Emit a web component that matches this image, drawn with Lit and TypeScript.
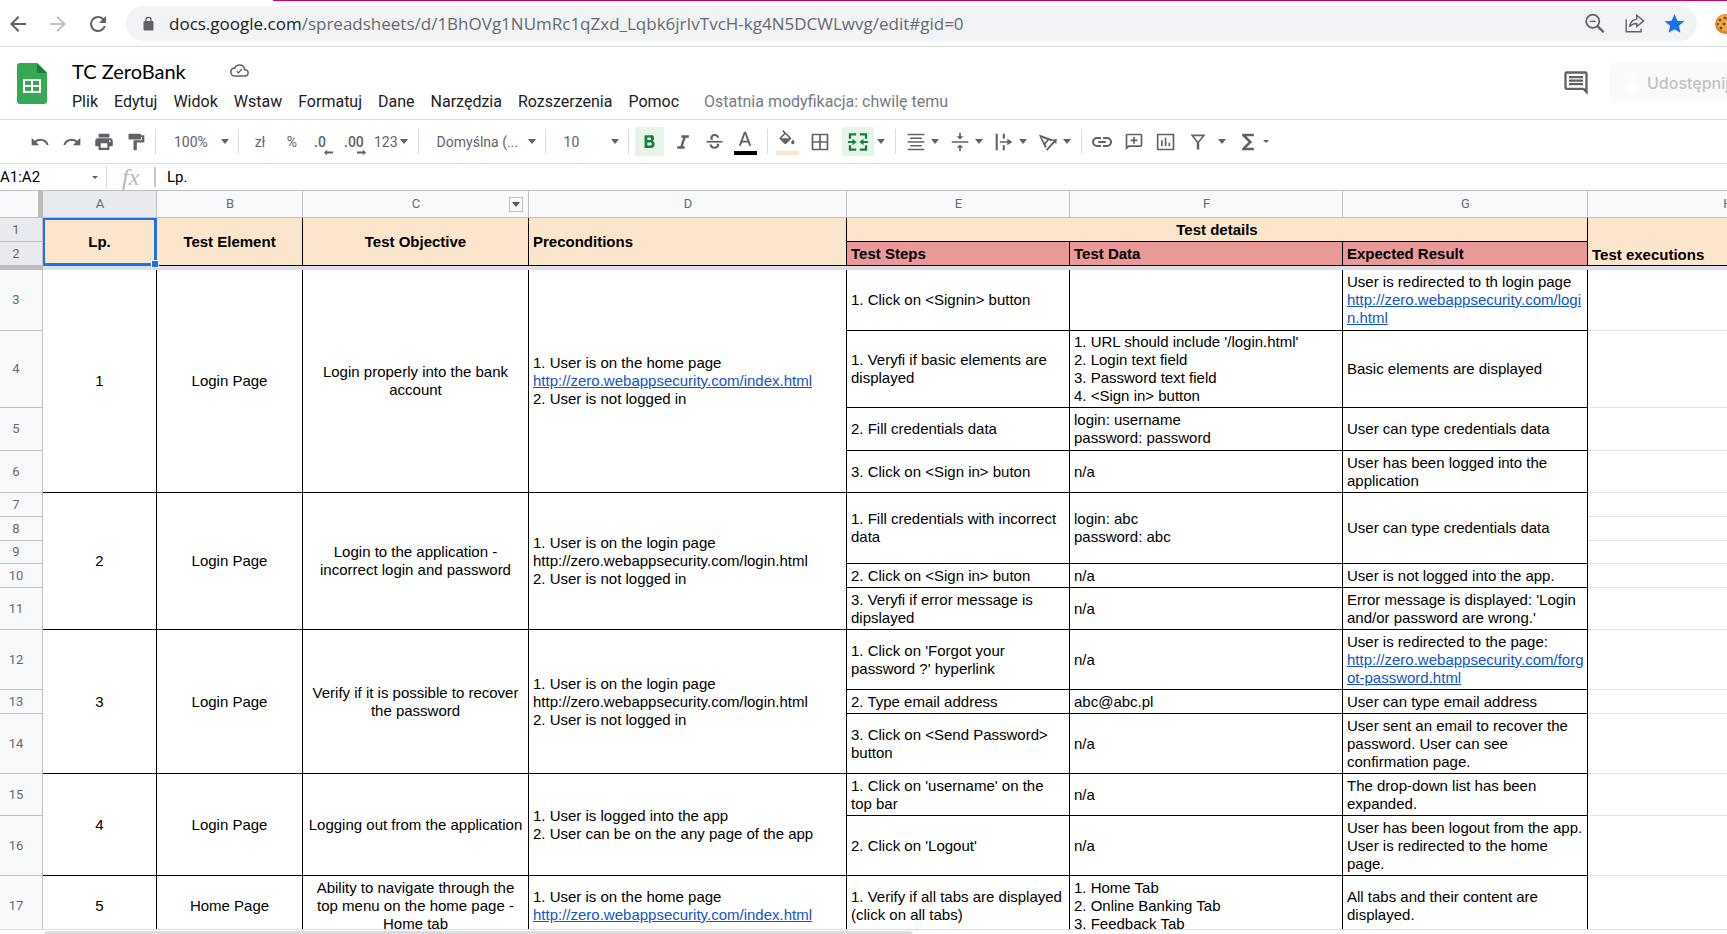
import { LitElement, html, css, svg, nothing } from "lit";
import { customElement } from "lit/decorators.js";

const icon = (body: unknown, size = 20, cls = "") =>
  html`<svg class=${cls} width=${size} height=${size} viewBox="0 0 24 24" fill="currentColor" aria-hidden="true">${body}</svg>`;

const I = {
  back: svg`<path d="M20 11H7.83l5.59-5.59L12 4l-8 8 8 8 1.41-1.41L7.83 13H20v-2z"/>`,
  forward: svg`<path d="M12 4l-1.41 1.41L16.17 11H4v2h12.17l-5.58 5.59L12 20l8-8z"/>`,
  reload: svg`<path d="M17.65 6.35A7.96 7.96 0 0 0 12 4a8 8 0 1 0 7.73 10h-2.08A6 6 0 1 1 12 6c1.66 0 3.14.69 4.22 1.78L13 11h7V4l-2.35 2.35z"/>`,
  lock: svg`<path d="M18 8h-1V6A5 5 0 0 0 7 6v2H6a2 2 0 0 0-2 2v11a2 2 0 0 0 2 2h12a2 2 0 0 0 2-2V10a2 2 0 0 0-2-2zM9 6a3 3 0 0 1 6 0v2H9V6z"/>`,
  zoomOut: svg`<g fill="none" stroke="currentColor" stroke-width="2"><circle cx="10" cy="9.500" r="7.500"/><path d="M15.500 15l7 7" stroke-width="2.800"/><path d="M6.500 9.500h7" stroke-width="1.500"/></g>`,
  share: svg`<g fill="none" stroke="currentColor" stroke-width="1.600"><path d="M2.500 7v14.500h17v-3.500"/><path d="M14.500 2.500l8 6.500-8 6.500v-3.500c-3.500 0-6 .8-8 3.700.6-5 3.500-8 8-8.700z"/></g>`,
  star: svg`<path d="M12 18.600 18.800 22.500l-1.800-7.800L23.500 9.500l-8.200-.7L12 1 8.700 8.800.5 9.500l6.500 5.200-1.800 7.800z"/>`,
  cloud: svg`<path d="M19.350 10.040A7.490 7.490 0 0 0 12 4 7.480 7.480 0 0 0 5.350 8.040 5.990 5.990 0 0 0 0 14a6 6 0 0 0 6 6h13a5 5 0 0 0 .35-9.960zM19 18H6a4 4 0 0 1 0-8h.71A5.500 5.500 0 0 1 17.500 11.500v.5H19a3 3 0 0 1 0 6z"/><path d="M10.500 16.200 7.800 13.500l1.200-1.200 1.500 1.500 4-4 1.200 1.200z"/>`,
  comment: svg`<path d="M22 4a2 2 0 0 0-2-2H4a2 2 0 0 0-2 2v12a2 2 0 0 0 2 2h14l4 4V4zm-2 13.170L18.830 16H4V4h16v13.170zM6 12h12v2H6zm0-3h12v2H6zm0-3h12v2H6z"/>`,
  person: svg`<circle cx="12" cy="5" r="3.500"/><path d="M4 15c0-4 4-5.500 8-5.500s8 1.500 8 5.500z"/><g fill="none" stroke="currentColor" stroke-width="2"><circle cx="8" cy="19" r="3"/><circle cx="16" cy="19" r="3"/></g>`,
  undo: svg`<path d="M12.500 8c-2.650 0-5.050.99-6.900 2.600L2 7v9h9l-3.620-3.620A7.970 7.970 0 0 1 12.500 10.500c3.540 0 6.550 2.310 7.600 5.500l2.370-.78A10.520 10.520 0 0 0 12.500 8z"/>`,
  redo: svg`<path d="M18.400 10.600A10.450 10.450 0 0 0 11.500 8a10.520 10.520 0 0 0-9.970 7.220L3.900 16a8 8 0 0 1 12.720-3.620L13 16h9V7l-3.600 3.600z"/>`,
  print: svg`<path d="M19.500 7.500h-15a3 3 0 0 0-3 3V17h4v4.500h13V17h4v-6.500a3 3 0 0 0-3-3zM16 19H8v-5.500h8V19zm3-7a1.100 1.100 0 1 1 0-2.200 1.100 1.100 0 0 1 0 2.200zM18.500 2h-13v4.500h13V2z"/>`,
  paint: svg`<path d="M18 4V3a1 1 0 0 0-1-1H4a1 1 0 0 0-1 1v5a1 1 0 0 0 1 1h13a1 1 0 0 0 1-1V6h1v4H9v11a1 1 0 0 0 1 1h2a1 1 0 0 0 1-1v-8.500h9V4h-4z"/>`,
  bold: svg`<path fill-rule="evenodd" d="M16.600 11.300A4.300 4.300 0 0 0 18.500 7.500 4.800 4.800 0 0 0 13.500 3H5v18h9a5.200 5.200 0 0 0 2.600-9.700zM9 6.500h3.500a1.700 1.700 0 0 1 0 3.400H9zM9 13.500h4.200a2 2 0 0 1 0 4H9z"/>`,
  italic: svg`<path d="M10 4v3h2.210l-3.420 10H5v3h9v-3h-2.210l3.420-10H19V4z"/>`,
  strike: svg`<path d="M2 11.200h20v2.200H2z"/><path d="M7 9.700C5.800 6 8.500 2.500 12.200 2.500c3.300 0 5.500 2 5.700 4.900h-3c-.2-1.500-1.100-2.300-2.700-2.300-2.400 0-3.400 1.800-2 4.600zM14.800 14.900c.8 2.300-.6 3.800-2.700 3.800s-3.200-1.200-3.300-2.900h-3c.1 3.200 2.500 5.400 6.200 5.400 4 0 6.700-2.600 5.800-6.300z"/>`,
  color: svg`<path d="M10.800 2 4.500 19h2.600l1.400-4h7l1.400 4h2.600L13.200 2h-2.400zM9.300 12.800 12 5l2.700 7.800H9.300z"/>`,
  fill: svg`<path d="M16.560 8.940 7.620 0 6.210 1.410l2.380 2.380-5.150 5.150a1.490 1.490 0 0 0 0 2.120l5.500 5.500a1.500 1.500 0 0 0 2.120 0l5.500-5.500a1.500 1.500 0 0 0 0-2.120zM5.210 10 10 5.210 14.790 10H5.210zM19 11.500s-2 2.170-2 3.500a2 2 0 0 0 4 0c0-1.330-2-3.500-2-3.500z"/>`,
  borders: svg`<path d="M2 2v20h20V2H2zm9 18H4v-7h7v7zm0-9H4V4h7v7zm9 9h-7v-7h7v7zm0-9h-7V4h7v7z"/>`,
  merge: svg`<path d="M2 2.500h8V5H4.500v3.500H2zM14 2.500h8v6h-2.500V5H14zM2 15.500h2.500V19H10v2.500H2zM19.500 15.500H22v6h-8V19h5.500zM1 11h5V8.500l4.500 3.500L6 15.500V13H1zM23 11h-5V8.500L13.500 12l4.500 3.500V13h5z"/>`,
  alignH: svg`<path d="M2 2h20v2H2zM5 6.500h14v2H5zM2 11h20v2H2zM5 15.500h14v2H5zM2 20h20v2H2z"/>`,
  alignV: svg`<path d="M8 19h3v4h2v-4h3l-4-4-4 4zm8-14h-3V1h-2v4H8l4 4 4-4zM2 11v2h20v-2H2z"/>`,
  wrap: svg`<path d="M2 2h2.500v20H2zM10.500 2H13v6h-2.500zM10.500 16H13v6h-2.500zM7 11h9V8l6 4-6 4v-3H7z"/>`,
  rotate: svg`<path d="M1 3 18 9l-2 2-3-1-4 5 1.300 2.800L8.500 19.500zM4.300 6.500 8 13l3-3.800z" fill-rule="evenodd"/><path d="m9.500 21 9-10-2-1.500 6-1.500-.5 6.500-1.900-1.900-9 9.900z"/>`,
  link: svg`<path d="M2.500 12A3.600 3.600 0 0 1 6 8.400h4.800V6H6a6 6 0 0 0 0 12h4.800v-2.400H6A3.600 3.600 0 0 1 2.500 12zM7.500 13.200h9v-2.400h-9zM18 6h-4.800v2.400H18a3.600 3.600 0 0 1 0 7.200h-4.800V18H18a6 6 0 0 0 0-12z"/>`,
  addComment: svg`<path d="M2 22V4a2 2 0 0 1 2-2h16a2 2 0 0 1 2 2v12a2 2 0 0 1-2 2H6zM4 4v13l1.200-1H20V4zm7 2h2v3h3v2h-3v3h-2v-3H8V9h3z" fill-rule="evenodd"/>`,
  chart: svg`<path d="M1 2h21v20H1zM3 4v16h17V4zM6 10h2v7H6zm4.500-3h2v10h-2zm4.500 6h2v4h-2z" fill-rule="evenodd"/>`,
  filter: svg`<path d="M3 3h18l-7.500 9.500V21h-3v-8.500zM7 5.200l5 6.300 5-6.300z" fill-rule="evenodd"/>`,
  sigma: svg`<path d="M19 2H5v2.500L12.500 12 5 19.500V22h14v-3h-9l7-7-7-7h9z"/>`,
  left: svg`<path d="M2 12l7-6v4h13v4H9v4z"/>`,
  right: svg`<path d="M22 12l-7-6v4H2v4h13v4z"/>`,
};

const MENU = ["Plik", "Edytuj", "Widok", "Wstaw", "Formatuj", "Dane", "Narzędzia", "Rozszerzenia", "Pomoc"];
const COLUMNS = [
  { name: "A", width: 114 }, { name: "B", width: 146 }, { name: "C", width: 226 }, { name: "D", width: 318 },
  { name: "E", width: 223 }, { name: "F", width: 273 }, { name: "G", width: 245 }, { name: "H", width: 280 },
];

interface Cell { t: string; rows?: number; cls?: string }
interface Row { n: number; h: number; cells: Cell[] }

const c = (t: string, rows = 1): Cell => ({ t, rows, cls: "mid" });
const l = (t: string, rows = 1): Cell => ({ t, rows });

const ROWS: Row[] = [
  { n: 3, h: 61, cells: [c("1", 4), c("Login Page", 4), c("Login properly into the bank\naccount", 4),
    l("1. User is on the home page\n[http://zero.webappsecurity.com/index.html]\n2. User is not logged in", 4),
    l("1. Click on <Signin> button"), l(""), l("User is redirected to th login page\n[http://zero.webappsecurity.com/logi\nn.html]")] },
  { n: 4, h: 77, cells: [l("1. Veryfi if basic elements are\ndisplayed"),
    l("1. URL should include '/login.html'\n2. Login text field\n3. Password text field\n4. <Sign in> button"), l("Basic elements are displayed")] },
  { n: 5, h: 43, cells: [l("2. Fill credentials data"), l("login: username\npassword: password"), l("User can type credentials data")] },
  { n: 6, h: 42, cells: [l("3. Click on <Sign in> buton"), l("n/a"), l("User has been logged into the\napplication")] },
  { n: 7, h: 24, cells: [c("2", 5), c("Login Page", 5), c("Login to the application -\nincorrect login and password", 5),
    l("1. User is on the login page\nhttp://zero.webappsecurity.com/login.html\n2. User is not logged in", 5),
    l("1. Fill credentials with incorrect\ndata", 3), l("login: abc\npassword: abc", 3), l("User can type credentials data", 3)] },
  { n: 8, h: 24, cells: [] },
  { n: 9, h: 23, cells: [] },
  { n: 10, h: 24, cells: [l("2. Click on <Sign in> buton"), l("n/a"), l("User is not logged into the app.")] },
  { n: 11, h: 42, cells: [l("3. Veryfi if error message is\ndipslayed"), l("n/a"), l("Error message is displayed: 'Login\nand/or password are wrong.'")] },
  { n: 12, h: 60, cells: [c("3", 3), c("Login Page", 3), c("Verify if it is possible to recover\nthe password", 3),
    l("1. User is on the login page\nhttp://zero.webappsecurity.com/login.html\n2. User is not logged in", 3),
    l("1. Click on 'Forgot your\npassword ?' hyperlink"), l("n/a"), l("User is redirected to the page:\n[http://zero.webappsecurity.com/forg\not-password.html]")] },
  { n: 13, h: 24, cells: [l("2. Type email address"), l("abc@abc.pl"), l("User can type email address")] },
  { n: 14, h: 60, cells: [l("3. Click on <Send Password>\nbutton"), l("n/a"), l("User sent an email to recover the\npassword. User can see\nconfirmation page.")] },
  { n: 15, h: 42, cells: [c("4", 2), c("Login Page", 2), c("Logging out from the application", 2),
    l("1. User is logged into the app\n2. User can be on the any page of the app", 2),
    l("1. Click on 'username' on the\ntop bar"), l("n/a"), l("The drop-down list has been\nexpanded.")] },
  { n: 16, h: 60, cells: [l("2. Click on 'Logout'"), l("n/a"), l("User has been logout from the app.\nUser is redirected to the home\npage.")] },
  { n: 17, h: 60, cells: [c("5"), c("Home Page"), c("Ability to navigate through the\ntop menu on the home page -\nHome tab"),
    l("1. User is on the home page\n[http://zero.webappsecurity.com/index.html]"),
    l("1. Verify if all tabs are displayed\n(click on all tabs)"), l("1. Home Tab\n2. Online Banking Tab\n3. Feedback Tab"), l("All tabs and their content are\ndisplayed.")] },
];

/* Text inside square brackets is rendered as a hyperlink. */
const rich = (t: string) =>
  t.split(/[\[\]]/).map((part, i) => i % 2
    ? html`<a href=${part.replace("\n", "")}>${part}</a>`
    : part);

@customElement("sheet-grid")
class SheetGrid extends LitElement {
  static styles = css`
    :host { display: block; flex: 1; min-height: 0; overflow: hidden; background: #fff; }
    table { table-layout: fixed; width: 1868px; border-collapse: separate; border-spacing: 0;
      font: 15px/18px "Liberation Sans", Arial, sans-serif; color: #000; }
    th, td { box-sizing: border-box; padding: 0 3px 0 4px; overflow: hidden; white-space: pre; text-align: left; vertical-align: middle;
      border: 0 solid #000; border-width: 0 1px 1px 0; }
    .col, .num { background: #f8f9fa; color: #666a6f; border-color: #c0c0c0; text-align: center;
      font: 13px/18px Roboto, sans-serif; }
    .col { height: 27px; white-space: normal; }
    .col-in { display: flex; align-items: center; justify-content: center; position: relative; }
    .drop { position: absolute; right: 2px; width: 14px; height: 15px; padding: 0; background: #f8f9fa; border: 1px solid #c0c0c0;
      display: grid; place-items: center; }
    .num { padding: 0 10px 0 0; }
    .on { background: #e8eaed; }
    .corner { border-right: 5px solid #bcbcbc; }
    .mid { text-align: center; padding: 0 3px; }
    .peach { background: #fce5cd; }
    .red { background: #ea9999; }
    .low { vertical-align: bottom; padding-bottom: 1px; }
    .picked { position: relative; overflow: visible; box-shadow: inset 0 0 0 2px #1a73e8; border-color: #1a73e8; }
    .handle { position: absolute; right: -3px; bottom: -3px; width: 6px; height: 6px; background: #1a73e8; border: 1px solid #fff; }
    .freeze td { height: 4px; padding: 0; background: #dadfe8; border: 0; }
    .freeze .knob { background: #bcbcbc; }
    .blank { border-color: #e2e3e3; }
    a { color: #1155cc; text-decoration: underline; }
    .tri { border: 4px solid transparent; border-top: 5px solid #555; border-bottom: 0; }
  `;

  render() {
    return html`<table>
      <colgroup><col style="width:43px">${COLUMNS.map((k) => html`<col style="width:${k.width}px">`)}</colgroup>
      <thead>
        <tr>
          <td class="col corner"></td>
          ${COLUMNS.map((k) => html`<th class="col ${k.name === "A" ? "on" : ""}" scope="col"><div class="col-in">${k.name}
            ${k.name === "C" ? html`<button class="drop" aria-label="Menu kolumny"><span class="tri"></span></button>` : nothing}</div></th>`)}
        </tr>
        <tr style="height:24px">
          <th class="num on" scope="row">1</th>
          <th class="peach mid picked" rowspan="2">Lp.<span class="handle"></span></th>
          <th class="peach mid" rowspan="2">Test Element</th>
          <th class="peach mid" rowspan="2">Test Objective</th>
          <th class="peach" rowspan="2">Preconditions</th>
          <th class="peach mid" colspan="3">Test details</th>
          <th class="peach low" rowspan="2">Test executions</th>
        </tr>
        <tr style="height:24px">
          <th class="num on" scope="row">2</th>
          <th class="red">Test Steps</th><th class="red">Test Data</th><th class="red">Expected Result</th>
        </tr>
        <tr class="freeze"><td class="knob"></td><td colspan="8"></td></tr>
      </thead>
      <tbody>
        ${ROWS.map((r) => html`<tr style="height:${r.h}px">
          <th class="num" scope="row">${r.n}</th>
          ${r.cells.map((x) => html`<td class=${x.cls ?? ""} rowspan=${x.rows ?? 1}>${rich(x.t)}</td>`)}
          <td class="blank"></td>
        </tr>`)}
      </tbody>
    </table>`;
  }
}

@customElement("app-root")
class AppRoot extends LitElement {
  static styles = css`
    :host { display: flex; flex-direction: column; height: 100vh; overflow: hidden; background: #fff; color: #000;
      font: 16px/20px Roboto, sans-serif; }
    button { font: inherit; color: inherit; background: none; border: 0; padding: 0; margin: 0; white-space: nowrap; flex: none; }
    svg { display: block; flex: none; }
    input { font: inherit; color: inherit; border: 0; background: none; padding: 0; outline: 0; min-width: 0; }
    select { font: inherit; color: inherit; border: 0; background: none; padding: 0; margin: 0; outline: 0; appearance: none; flex: 1; min-width: 0; }
    .accent { height: 1px; margin-left: 273px; background: #c5007c; flex: none; }
    .browser { display: flex; align-items: center; height: 45px; border-bottom: 1px solid #dadce0; padding-left: 6px; flex: none; color: #5f6368; overflow: hidden; }
    .nav { display: flex; gap: 16px; width: 120px; }
    .dim { color: #bdc1c6; }
    .address { flex: 1; display: flex; align-items: center; height: 35px; border-radius: 18px; background: #f1f3f4; padding: 0 12px 0 15px; }
    .url { flex: 1; margin-left: 13px; font: 17px/24px "Open Sans", "Segoe UI", sans-serif; color: #666a6f; white-space: nowrap; }
    .host { color: #202124; }
    .tools { display: flex; gap: 19px; align-items: center; }
    .blue { color: #1a73e8; }
    .cookie { margin: 0 -8px 0 18px; }
    .head { display: flex; align-items: center; height: 72px; border-bottom: 1px solid #dadce0; flex: none; padding-left: 17px; overflow: hidden; }
    .names { flex: 1; margin-left: 25px; padding-top: 9px; }
    .title-row { display: flex; align-items: center; gap: 44px; height: 28px; color: #5f6368; }
    .title { font: 20px/28px Lato, sans-serif; color: #000; margin: 0; }
    .menu { display: flex; align-items: center; gap: 16px; height: 34px; color: #202124; }
    .last { margin-left: 9px; color: #777b80; }
    .note { color: #5f6368; margin-right: 20px; }
    .share { display: flex; align-items: center; gap: 6px; width: 140px; height: 40px; margin-right: -23px; padding-left: 13px; border-radius: 4px;
      background: #fafafa; color: #fff; }
    .share-label { font: 500 16px/20px Inter, sans-serif; color: #bfc1c3; }
    .bar { display: flex; align-items: center; height: 43px; border-bottom: 1px solid #dadce0; flex: none; color: #5f6368;
      font: 14px/20px Roboto, sans-serif; overflow: hidden; }
    .set { display: flex; align-items: center; flex: none; }
    .history { gap: 12px; padding: 0 9px 0 30px; }
    .picker { padding: 0 9px 0 18px; }
    .combo { display: flex; align-items: center; width: 55px; }
    .combo.wide { width: 99px; }
    .formats { padding: 0 10px 0 5px; }
    .cell { width: 32px; text-align: center; }
    .dec { position: relative; width: 30px; text-align: left; }
    .dec svg { position: absolute; left: 9px; bottom: -6px; }
    .dec.far svg { left: 12px; }
    .digits { display: flex; align-items: center; gap: 2px; }
    .decimals { display: flex; padding-left: 6px; font-weight: 500; }
    .styles { gap: 8px; padding: 0 10px 0 6px; }
    .fills { gap: 10px; padding: 0 10px 0 8px; }
    .aligns { gap: 11px; padding: 0 10px; }
    .inserts { gap: 12px; padding: 0 10px; }
    .drop { display: flex; align-items: center; gap: 5px; }
    .drop.near { gap: 3px; }
    .drop.far { gap: 10px; }
    .sep { width: 1px; height: 25px; background: #dadce0; flex: none; }
    .tri { border: 4px solid transparent; border-top: 5px solid #5f6368; border-bottom: 0; flex: none; }
    .tri.small { border-width: 3px; border-bottom: 0; }
    .active { background: #e6f4ea; color: #188038; width: 29px; height: 29px; display: grid; place-items: center; border-radius: 2px; }
    .active.wide { width: 32px; }
    .swatch { display: grid; justify-items: center; gap: 1px; width: 23px; padding-top: 2px; }
    .plain { display: grid; place-items: center; width: 23px; }
    .ink { width: 23px; height: 4px; background: #000; }
    .ink.peach { background: #fce5cd; }
    .formula { display: flex; align-items: center; height: 26px; border-bottom: 1px solid #c0c0c0; flex: none; font: 15px/20px Roboto, sans-serif; }
    .ref { width: 92px; }
    .thin { width: 1px; height: 22px; background: #dadce0; margin-left: 8px; }
    .fx { font: italic 24px/24px "Liberation Serif", serif; color: #b8b8b8; margin-left: 15px; width: 32px; }
    .thick { width: 2px; height: 20px; background: #c8c8c8; }
    .value { margin-left: 11px; flex: 1; }
    .foot { height: 3px; flex: none; border-top: 1px solid #dadce0; padding: 1px 12px 0 44px; overflow: hidden; }
    .thumb { width: 52%; height: 8px; border-radius: 8px; background: #dadce0; }
  `;

  private btn(label: string, body: unknown, size = 20, cls = "") {
    return html`<button class=${cls} aria-label=${label}>${icon(body, size)}</button>`;
  }

  private menuBtn(label: string, body: unknown, cls = "") {
    return html`<button class="drop ${cls}" aria-label=${label}>${icon(body, 20)}<span class="tri"></span></button>`;
  }

  private combo(label: string, value: string, wide = false) {
    return html`<div class="set picker"><label class="combo ${wide ? "wide" : ""}">
      <select aria-label=${label}><option>${value}</option></select><span class="tri"></span></label></div>
      <span class="sep"></span>`;
  }

  render() {
    return html`
      <div class="accent"></div>
      <nav class="browser">
        <div class="nav">
          ${this.btn("Wstecz", I.back, 24)}
          ${this.btn("Dalej", I.forward, 24, "dim")}
          ${this.btn("Odśwież", I.reload, 24)}
        </div>
        <div class="address">
          ${icon(I.lock, 15)}
          <div class="url"><span class="host">docs.google.com</span>/spreadsheets/d/1BhOVg1NUmRc1qZxd_Lqbk6jrIvTvcH-kg4N5DCWLwvg/edit#gid=0</div>
          <div class="tools">
            ${this.btn("Pomniejsz", I.zoomOut, 21)} ${this.btn("Udostępnij stronę", I.share, 21)}
            ${this.btn("Zakładka", I.star, 21, "blue")}
          </div>
        </div>
        <svg class="cookie" width="20" height="20" viewBox="0 0 20 20"><circle cx="10" cy="10" r="10" fill="#d98a2b"/><circle cx="10" cy="9" r="8" fill="#eba94c"/>
          <g fill="#6b3a12"><circle cx="5" cy="6" r="1.300"/><circle cx="9" cy="10" r="1.300"/><circle cx="6" cy="14" r="1.300"/><circle cx="10" cy="4" r="1.300"/><circle cx="3" cy="10" r="1"/></g></svg>
      </nav>

      <header class="head">
        <svg width="30" height="41" viewBox="0 0 30 41"><path d="M3 0h17l10 10v28a3 3 0 0 1-3 3H3a3 3 0 0 1-3-3V3a3 3 0 0 1 3-3z" fill="#34a853"/><path d="M20 0l10 10H20z" fill="#188038"/>
          <path d="M6 16h18v14H6zM8 18v4h6v-4zm8 0v4h6v-4zM8 24v4h6v-4zm8 0v4h6v-4z" fill="#fff" fill-rule="evenodd"/></svg>
        <div class="names">
          <div class="title-row"><h1 class="title">TC ZeroBank</h1>${icon(I.cloud, 19)}</div>
          <div class="menu">${MENU.map((m) => html`<button>${m}</button>`)}<span class="last">Ostatnia modyfikacja: chwilę temu</span></div>
        </div>
        ${this.btn("Komentarze", I.comment, 28, "note")}
        <button class="share">${icon(I.person, 18)}<span class="share-label">Udostępnij</span></button>
      </header>

      <div class="bar" role="toolbar" aria-label="Narzędzia">
        <div class="set history">${this.btn("Cofnij", I.undo)}${this.btn("Ponów", I.redo)}${this.btn("Drukuj", I.print)}${this.btn("Maluj format", I.paint)}</div>
        <span class="sep"></span>
        ${this.combo("Powiększenie", "100%")}
        <div class="set formats">
          <button class="cell">zł</button><button class="cell">%</button>
          <div class="decimals">
            <button class="dec">.0${icon(I.left, 11)}</button>
            <button class="dec far">.00${icon(I.right, 11)}</button>
          </div>
          <button class="digits">123<span class="tri"></span></button>
        </div>
        <span class="sep"></span>
        ${this.combo("Czcionka", "Domyślna (...", true)}
        ${this.combo("Rozmiar czcionki", "10")}
        <div class="set styles">
          ${this.btn("Pogrubienie", I.bold, 17, "active")}
          ${this.btn("Kursywa", I.italic, 20, "plain")}
          ${this.btn("Przekreślenie", I.strike, 19, "plain")}
          <button class="swatch" aria-label="Kolor tekstu">${icon(I.color, 20)}<span class="ink"></span></button>
        </div>
        <span class="sep"></span>
        <div class="set fills">
          <button class="swatch" aria-label="Kolor wypełnienia">${icon(I.fill, 20)}<span class="ink peach"></span></button>
          ${this.btn("Obramowanie", I.borders, 20, "plain")}
          <div class="drop near">${this.btn("Scal komórki", I.merge, 22, "active wide")}<span class="tri"></span></div>
        </div>
        <span class="sep"></span>
        <div class="set aligns">
          ${this.menuBtn("Wyrównanie w poziomie", I.alignH)}${this.menuBtn("Wyrównanie w pionie", I.alignV)}
          ${this.menuBtn("Zawijanie tekstu", I.wrap)}${this.menuBtn("Obracanie tekstu", I.rotate)}
        </div>
        <span class="sep"></span>
        <div class="set inserts">
          ${this.btn("Wstaw link", I.link)}${this.btn("Wstaw komentarz", I.addComment)}${this.btn("Wstaw wykres", I.chart)}
          ${this.menuBtn("Utwórz filtr", I.filter, "far")}
          <button class="drop" aria-label="Funkcje">${icon(I.sigma, 20)}<span class="tri small"></span></button>
        </div>
      </div>

      <div class="formula">
        <input class="ref" aria-label="Zakres" .value=${"A1:A2"}><span class="tri small"></span><span class="thin"></span>
        <span class="fx">fx</span><span class="thick"></span>
        <input class="value" aria-label="Formuła" .value=${"Lp."}>
      </div>

      <sheet-grid></sheet-grid>
      <div class="foot"><div class="thumb"></div></div>
    `;
  }
}
